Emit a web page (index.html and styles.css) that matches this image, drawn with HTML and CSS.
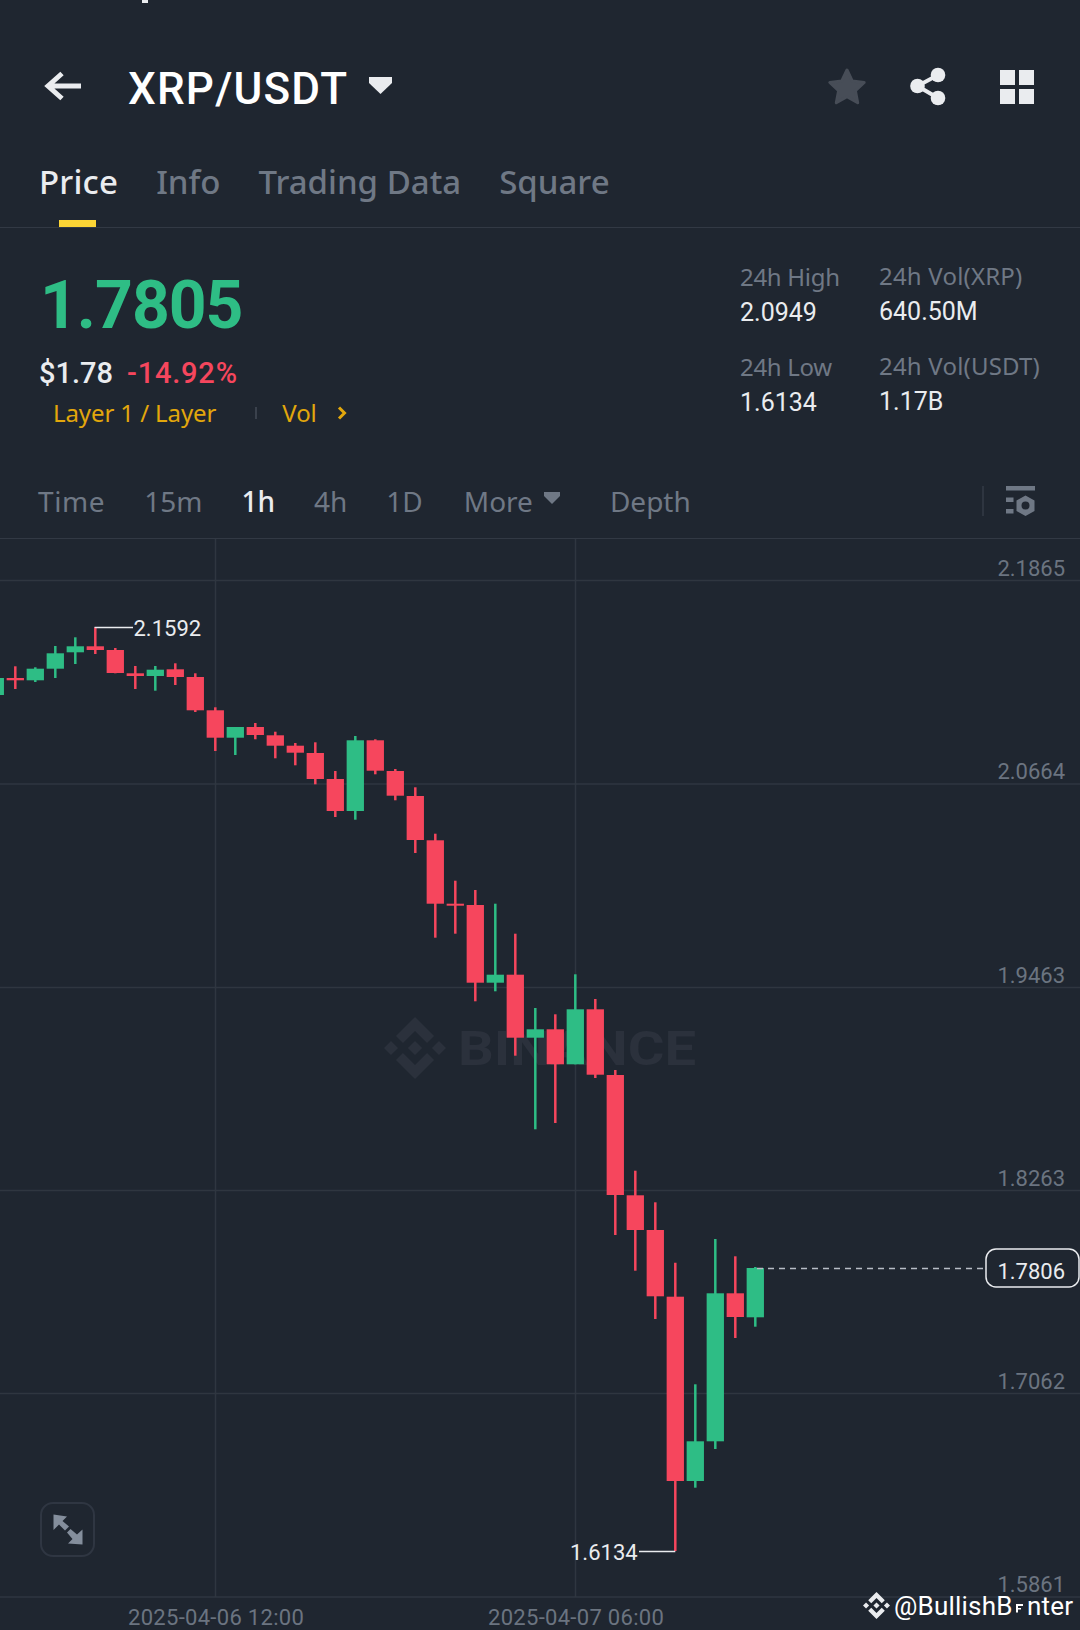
FILE: index.html
```html
<!doctype html>
<html lang="en">
<head>
	<meta charset="UTF-8">
	<title>XRP/USDT</title>
	<link rel="stylesheet" href="styles.css">
</head>
<body>
	<svg class="defs" width="0" height="0">
		<symbol id="bnb" viewBox="0 0 126.61 126.61">
			<path d="M38.73 53.2l24.59-24.58 24.6 24.6 14.3-14.31L63.32 0 24.42 38.9l14.31 14.3zM0 63.31l14.3-14.31 14.31 14.31-14.31 14.3zM38.73 73.41l24.59 24.59 24.6-24.6 14.31 14.29-38.9 38.91-38.91-38.88-.02-.02zM98 63.31l14.3-14.31 14.31 14.3-14.31 14.32zM77.83 63.3l-14.51-14.52-10.73 10.73-1.24 1.23-2.54 2.54 14.51 14.5 14.51-14.47z"/>
		</symbol>
	</svg>
	<i class="status-bit"></i>

	<div class="topbar">
		<svg class="back" width="38" height="30" viewBox="0 0 38 30"><path d="M37 15H4M18 2.500L4 15l14 12.500"/></svg>
		<div class="pair">XRP/USDT</div>
		<svg class="caret" width="23" height="17" viewBox="0 0 23 17"><path d="M0 0h23v6L11.500 17 0 6z"/></svg>
		<div class="actions">
			<svg class="star" width="40" height="40" viewBox="0 0 40 40"><path d="M20 3l5.200 11 12 1.500-8.800 8.200 2.300 12L20 29.800 9.300 35.700l2.300-12-8.800-8.200 12-1.500z"/></svg>
			<svg class="share" width="38" height="40" viewBox="0 0 38 40"><circle cx="29" cy="8" r="7.300"/><circle cx="8.500" cy="19" r="7.300"/><circle cx="29" cy="31" r="7.300"/><path d="M29 8L8.500 19 29 31"/></svg>
			<svg class="apps" width="34" height="34" viewBox="0 0 34 34"><path d="M0 0h15v15H0zM19 0h15v15H19zM0 19h15v15H0zM19 19h15v15H19z"/></svg>
		</div>
	</div>

	<div class="tabs">
		<div class="tab on">Price</div>
		<div class="tab">Info</div>
		<div class="tab">Trading Data</div>
		<div class="tab">Square</div>
	</div>

	<div class="summary">
		<div class="quote">
			<div class="last">1.7805</div>
			<div class="fiat"><span>$1.78</span><span class="change">-14.92%</span></div>
			<div class="tags">
				<span>Layer 1 / Layer</span>
				<i class="tick"></i>
				<span>Vol</span>
				<svg class="more" width="10" height="14" viewBox="0 0 10 14"><path d="M2 1.500L7.500 7 2 12.500"/></svg>
			</div>
		</div>
		<div class="stats">
			<div class="col first">
				<div class="lab">24h High</div>
				<div class="val">2.0949</div>
				<div class="lab gap">24h Low</div>
				<div class="val">1.6134</div>
			</div>
			<div class="col">
				<div class="lab">24h Vol(XRP)</div>
				<div class="val">640.50M</div>
				<div class="lab gap">24h Vol(USDT)</div>
				<div class="val">1.17B</div>
			</div>
		</div>
	</div>

	<div class="intervals">
		<span class="iv time">Time</span>
		<span class="iv">15m</span>
		<span class="iv on">1h</span>
		<span class="iv">4h</span>
		<span class="iv">1D</span>
		<span class="iv menu">More</span>
		<svg class="iv-caret" width="16" height="12" viewBox="0 0 16 12"><path d="M0 0h16v4L8 12 0 4z"/></svg>
		<span class="iv depth">Depth</span>
		<i class="iv-line"></i>
		<svg class="iv-set" width="30" height="30" viewBox="0 0 30 30"><path d="M1 0h29v4.500H1zM1 11.500h7.500V16H1zM1 23h7.500v4.500H1z"/><path fill-rule="evenodd" d="M20.500 9.500l9 5v10.500l-9 5-9-5V14.500zM20.500 15.500a4 4 0 1 0 0 8 4 4 0 0 0 0-8z"/></svg>
	</div>

	<div class="chart">
		<svg class="plot" width="1080" height="1091" viewBox="0 539 1080 1091">
			<g class="grid">
				<path d="M0 580.500H1080M0 784H1080M0 987.500H1080M0 1190.500H1080M0 1393.500H1080M0 1597H1080M215.500 539V1597M575.500 539V1597"/>
			</g>

			<use href="#bnb" class="mark" x="384" y="1017" width="62" height="62"/>
			<text class="mark-text" x="458" y="1065" textLength="238" lengthAdjust="spacingAndGlyphs">BINANCE</text>

			<g class="up"><path d="M-4.700 678V695"/><rect x="-13.350" y="678" height="17"/></g>
			<g class="dn"><path d="M15.300 666.300V689"/><rect x="6.650" y="678" height="2.300"/></g>
			<g class="up"><path d="M35.300 667.300V682"/><rect x="26.650" y="668.700" height="11.600"/></g>
			<g class="up"><path d="M55.300 646V678"/><rect x="46.650" y="653.300" height="15.400"/></g>
			<g class="up"><path d="M75.300 637.300V664"/><rect x="66.650" y="646.300" height="6"/></g>
			<g class="dn"><path d="M95.300 627.300V654"/><rect x="86.650" y="646.300" height="3.700"/></g>
			<g class="dn"><path d="M115.300 648V673.300"/><rect x="106.650" y="650" height="23"/></g>
			<g class="dn"><path d="M135.300 666V689"/><rect x="126.650" y="673.300" height="2.700"/></g>
			<g class="up"><path d="M155.300 666V690.700"/><rect x="146.650" y="669.700" height="6.300"/></g>
			<g class="dn"><path d="M175.300 663.300V685"/><rect x="166.650" y="669.300" height="7.700"/></g>
			<g class="dn"><path d="M195.300 673.300V712"/><rect x="186.650" y="677" height="33.300"/></g>
			<g class="dn"><path d="M215.300 707.300V751"/><rect x="206.650" y="710.300" height="27.400"/></g>
			<g class="up"><path d="M235.300 727V755"/><rect x="226.650" y="727" height="10.700"/></g>
			<g class="dn"><path d="M255.300 723V739.300"/><rect x="246.650" y="727" height="8"/></g>
			<g class="dn"><path d="M275.300 731.700V758.300"/><rect x="266.650" y="735.300" height="10.400"/></g>
			<g class="dn"><path d="M295.300 743V765.300"/><rect x="286.650" y="745.700" height="7"/></g>
			<g class="dn"><path d="M315.300 742.300V784.300"/><rect x="306.650" y="753" height="26"/></g>
			<g class="dn"><path d="M335.300 771V817"/><rect x="326.650" y="779" height="32"/></g>
			<g class="up"><path d="M355.300 736V819.700"/><rect x="346.650" y="740.300" height="70.700"/></g>
			<g class="dn"><path d="M375.300 739.300V774.300"/><rect x="366.650" y="740.300" height="30.400"/></g>
			<g class="dn"><path d="M395.300 769V800.300"/><rect x="386.650" y="771" height="24.700"/></g>
			<g class="dn"><path d="M415.300 787.300V853"/><rect x="406.650" y="796" height="44"/></g>
			<g class="dn"><path d="M435.300 833.700V937.700"/><rect x="426.650" y="840.300" height="63.400"/></g>
			<g class="dn"><path d="M455.300 880.700V933.700"/><rect x="446.650" y="903.700" height="2"/></g>
			<g class="dn"><path d="M475.300 890V1001.300"/><rect x="466.650" y="905" height="77.700"/></g>
			<g class="up"><path d="M495.300 903.700V991.300"/><rect x="486.650" y="974.700" height="8"/></g>
			<g class="dn"><path d="M515.300 933.700V1055.700"/><rect x="506.650" y="974.700" height="63"/></g>
			<g class="up"><path d="M535.300 1008V1129.300"/><rect x="526.650" y="1029.300" height="8.400"/></g>
			<g class="dn"><path d="M555.300 1014.300V1123"/><rect x="546.650" y="1029.300" height="35"/></g>
			<g class="up"><path d="M575.300 974.300V1064.300"/><rect x="566.650" y="1009.300" height="55"/></g>
			<g class="dn"><path d="M595.300 999V1078"/><rect x="586.650" y="1009.300" height="65.400"/></g>
			<g class="dn"><path d="M615.300 1070V1235"/><rect x="606.650" y="1075" height="120"/></g>
			<g class="dn"><path d="M635.300 1170.700V1270.700"/><rect x="626.650" y="1195.300" height="34.700"/></g>
			<g class="dn"><path d="M655.300 1202.300V1319"/><rect x="646.650" y="1230" height="66.300"/></g>
			<g class="dn"><path d="M675.300 1262.700V1551"/><rect x="666.650" y="1296.700" height="184.300"/></g>
			<g class="up"><path d="M695.300 1384.300V1487.700"/><rect x="686.650" y="1441.300" height="39.700"/></g>
			<g class="up"><path d="M715.300 1239V1449"/><rect x="706.650" y="1293.300" height="148"/></g>
			<g class="dn"><path d="M735.300 1256.300V1338"/><rect x="726.650" y="1293.300" height="23.700"/></g>
			<g class="up"><path d="M755.300 1267V1326.700"/><rect x="746.650" y="1268" height="49.300"/></g>

			<path class="leader" d="M95.300 628V627.500H133M639 1551.500H675.300"/>
			<text class="hl" x="133.500" y="636">2.1592</text>
			<text class="hl" x="570" y="1560">1.6134</text>

			<text class="axis" x="1065" y="576">2.1865</text>
			<text class="axis" x="1065" y="779">2.0664</text>
			<text class="axis" x="1065" y="983">1.9463</text>
			<text class="axis" x="1065" y="1186">1.8263</text>
			<text class="axis" x="1065" y="1389">1.7062</text>
			<text class="axis" x="1065" y="1592">1.5861</text>

			<text class="date" x="128" y="1625">2025-04-06 12:00</text>
			<text class="date" x="488" y="1625">2025-04-07 06:00</text>

			<path class="dash" d="M757 1268.500H985"/>
			<rect class="now-box" x="986" y="1249" width="93" height="38" rx="10"/>
			<text class="now" x="1065" y="1279">1.7806</text>

			<use href="#bnb" class="tag-logo" x="863" y="1592" width="27" height="27"/>
			<text class="handle" x="894" y="1615">@BullishB<tspan class="gone">a</tspan>nter</text>
			<path class="handle-bit" d="M1016 1604h7v2h-5v2h3v1.500h-3v3h-2z"/>
		</svg>

		<div class="expand">
			<svg width="36" height="36" viewBox="0 0 36 36"><path d="M2.500 1.500L16 3.500 11.500 8 18 13.500 14 17.500 8 11.500 2.500 17zM31.500 31.500L17 30.500 21.500 26 16 19.500 19.500 16 26 21.500 31.500 16.500z"/></svg>
		</div>
	</div>
</body>
</html>
```

FILE: styles.css
```css
*{margin:0;padding:0;box-sizing:border-box;}
html,body{background:#1f2630;}
body{
	width:1080px;
	height:1630px;
	overflow:hidden;
	color:#eaecef;
	font-family:"Noto Sans",Roboto,sans-serif;
	position:relative;
}
i{display:block;}
svg{display:block;flex:none;}
.defs{position:absolute;}
.status-bit{position:absolute;left:142px;top:0;width:6px;height:3px;background:#eaecef;}

/* top bar */
.topbar{
	height:62px;
	margin-top:56px;
	padding:0 46px 0 44px;
	display:flex;
	align-items:center;
}
.back{margin-top:-2px;}
.back path{fill:none;stroke:#eaecef;stroke-width:5;}
.pair{
	margin:3px 0 0 46px;
	font-family:Roboto,sans-serif;
	font-size:44px;
	font-weight:500;
	letter-spacing:1.200px;
	color:#fff;
}
.caret{margin:-3px 0 0 21px;fill:#eaecef;}
.actions{
	margin-left:auto;
	display:flex;
	align-items:center;
}
.star{fill:#474d57;stroke:#474d57;stroke-width:3;stroke-linejoin:round;}
.share{margin-left:42px;fill:#eaecef;}
.share path{fill:none;stroke:#eaecef;stroke-width:4;}
.apps{margin-left:53px;fill:#eaecef;}

/* tabs */
.tabs{
	height:110px;
	padding:0 0 23px 39px;
	display:flex;
	align-items:flex-end;
	gap:38px;
	border-bottom:1px solid #323944;
}
.tab{
	font-size:33px;
	line-height:44px;
	font-weight:500;
	color:#6f7885;
	position:relative;
}
.tab.on{color:#eaecef;letter-spacing:.2px;}
.tab.on:after{
	content:"";
	position:absolute;
	left:20px;
	bottom:-23px;
	width:37px;
	height:7px;
	background:#fcd535;
}

/* price summary */
.summary{
	height:235px;
	display:flex;
	justify-content:space-between;
}
.quote{padding:38px 0 0 40px;}
.last{
	font-family:Roboto,sans-serif;
	font-size:66px;
	line-height:80px;
	font-weight:700;
	letter-spacing:-1px;
	color:#2ebd85;
}
.fiat{
	margin:7px 0 0 -1px;
	display:flex;
	gap:14px;
	font-family:Roboto,sans-serif;
	font-size:29px;
	line-height:40px;
	font-weight:500;
}
.change{color:#f6465d;letter-spacing:.8px;}
.tags{
	margin:3px 0 0 -1px;
	padding-left:14px;
	display:flex;
	align-items:center;
	font-size:24px;
	line-height:34px;
	letter-spacing:-.1px;
	color:#e2a70c;
}
.tick{width:2px;height:12px;margin:0 25px 0 39px;background:#3a414c;}
.more{margin-left:20px;}
.more path{fill:none;stroke:#e2a70c;stroke-width:3;}
.stats{
	width:340px;
	padding-top:31px;
	display:flex;
}
.col{flex:1;}
.col.first{flex:none;width:139px;padding-top:1px;}
.lab{font-size:24px;line-height:34px;letter-spacing:.2px;color:#6f7885;}
.first .lab{letter-spacing:-.3px;}
.lab.gap{margin-top:19px;}
.val{font-family:Roboto,sans-serif;font-size:25px;line-height:37px;color:#eaecef;}

/* interval row */
.intervals{
	height:76px;
	padding:0 45px 0 38px;
	display:flex;
	align-items:center;
	border-bottom:1px solid #323944;
}
.iv{
	font-size:28px;
	color:#6f7885;
	margin-left:39px;
}
.iv.time{margin-left:0;letter-spacing:.6px;}
.iv.on{color:#eaecef;font-weight:500;}
.iv.menu{margin-left:41px;}
.iv-caret{margin:-6px 0 0 11px;fill:#6f7885;}
.iv.depth{margin-left:50px;}
.iv-line{width:2px;height:30px;margin-left:auto;background:#2e3540;}
.iv-set{margin-left:21px;fill:#6f7885;}

/* chart */
.chart{position:relative;height:1091px;}
.grid path{fill:none;stroke:#2f3640;stroke-width:1.500;}
.mark{fill:#2b313c;}
.mark-text{font-family:Roboto,sans-serif;font-size:49px;font-weight:700;fill:#2b313c;}
.up path{stroke:#2ebd85;stroke-width:2.500;}
.up rect{fill:#2ebd85;width:17.300px;}
.dn path{stroke:#f6465d;stroke-width:2.500;}
.dn rect{fill:#f6465d;width:17.300px;}
.leader{fill:none;stroke:#eaecef;stroke-width:1.500;}
.hl,.now,.axis,.date,.handle{font-family:Roboto,sans-serif;}
.hl{font-size:22px;fill:#eaecef;}
.axis{font-size:22px;fill:#6b7480;text-anchor:end;}
.date{font-size:22px;fill:#6b7480;letter-spacing:.3px;}
.dash{fill:none;stroke:#b7bdc6;stroke-width:1.500;stroke-dasharray:6 5;}
.now-box{fill:#1f2630;stroke:#eaecef;stroke-width:1.500;}
.now{font-size:22px;fill:#eaecef;text-anchor:end;}
.tag-logo{fill:#eaecef;}
.handle{font-size:26px;fill:#fff;letter-spacing:.2px;}
.gone{fill:transparent;}
.handle-bit{fill:#fff;}
.expand{
	position:absolute;
	left:40px;
	top:963px;
	width:55px;
	height:55px;
	padding:9px;
	border:2px solid #2f3642;
	border-radius:13px;
}
.expand svg{fill:#848e9c;}
```
